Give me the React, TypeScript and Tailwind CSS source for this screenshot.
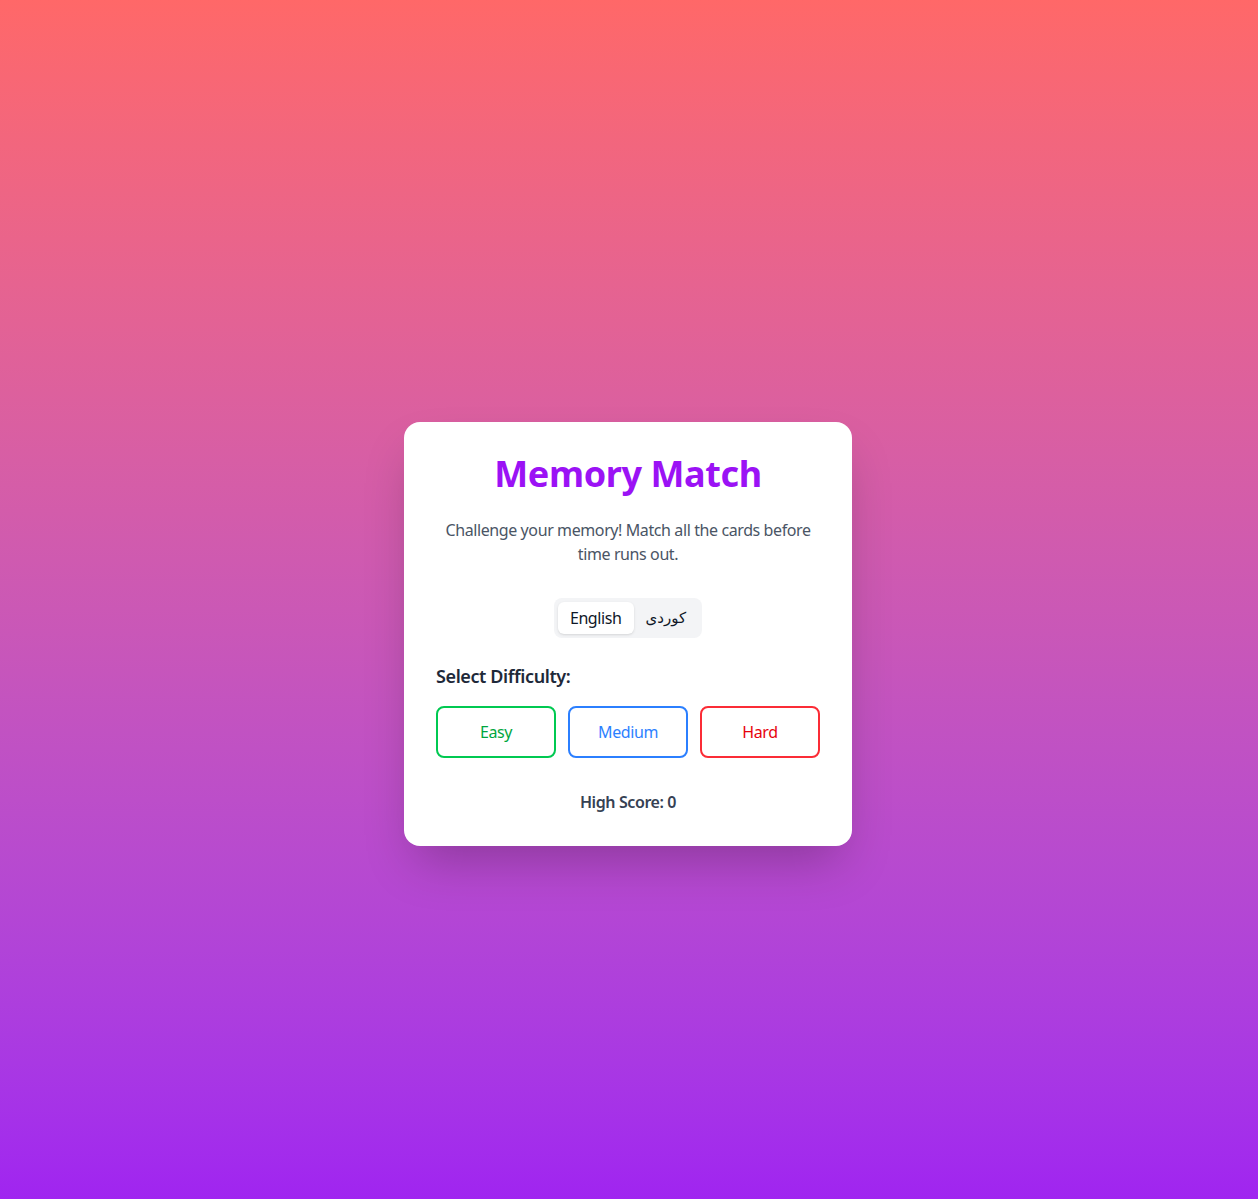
import React, { useState } from "react";

type Level = "easy" | "medium" | "hard";

const levels: { id: Level; label: string; className: string }[] = [
  { id: "easy", label: "Easy", className: "border-green-500 text-green-600 hover:bg-green-50" },
  { id: "medium", label: "Medium", className: "border-blue-500 text-blue-500 hover:bg-blue-50" },
  { id: "hard", label: "Hard", className: "border-red-500 text-red-600 hover:bg-red-50" },
];

const LanguageToggle = ({
  lang,
  setLang,
}: {
  lang: "en" | "ku";
  setLang: (l: "en" | "ku") => void;
}): JSX.Element => {
  return (
    <div className="inline-flex p-1 bg-gray-100 rounded-lg">
      <button
        onClick={() => setLang("en")}
        className={`px-3 py-1 rounded-md text-base leading-6 ${
          lang === "en" ? "bg-white shadow-sm text-gray-900" : "text-gray-900"
        }`}
      >
        English
      </button>
      <button
        onClick={() => setLang("ku")}
        className={`px-3 py-1 rounded-md text-[15px] leading-6 tracking-normal font-['DejaVu_Sans',sans-serif] ${
          lang === "ku" ? "bg-white shadow-sm text-gray-900" : "text-gray-900"
        }`}
      >
        کوردی
      </button>
    </div>
  );
};

const App: React.FC = () => {
  const [lang, setLang] = useState<"en" | "ku">("en");
  const [highScore] = useState(0);

  return (
    <div className="min-h-screen flex items-center justify-center pt-[69px] pr-[2px] bg-gradient-to-b from-[#ff6868] to-[#a024f0] font-['Noto_Sans',sans-serif]">
      <div className="w-[448px] bg-white rounded-2xl shadow-2xl p-8 text-center tracking-[-0.025em]">
        <h1 className="mb-6 text-4xl font-bold text-[#9b12f5]">Memory Match</h1>
        <p className="mb-8 text-base leading-6 text-gray-600">
          Challenge your memory! Match all the cards before time runs out.
        </p>
        <div className="mb-6">
          <LanguageToggle lang={lang} setLang={setLang} />
        </div>
        <h2 className="mb-4 text-left text-lg font-semibold text-gray-800">Select Difficulty:</h2>
        <div className="grid grid-cols-3 gap-3">
          {levels.map((l) => (
            <button
              key={l.id}
              className={`py-3 border-2 rounded-lg bg-white text-base leading-6 transition ${l.className}`}
            >
              {l.label}
            </button>
          ))}
        </div>
        <p className="mt-8 text-base font-semibold text-gray-700">High Score: {highScore}</p>
      </div>
    </div>
  );
};

export default App;
